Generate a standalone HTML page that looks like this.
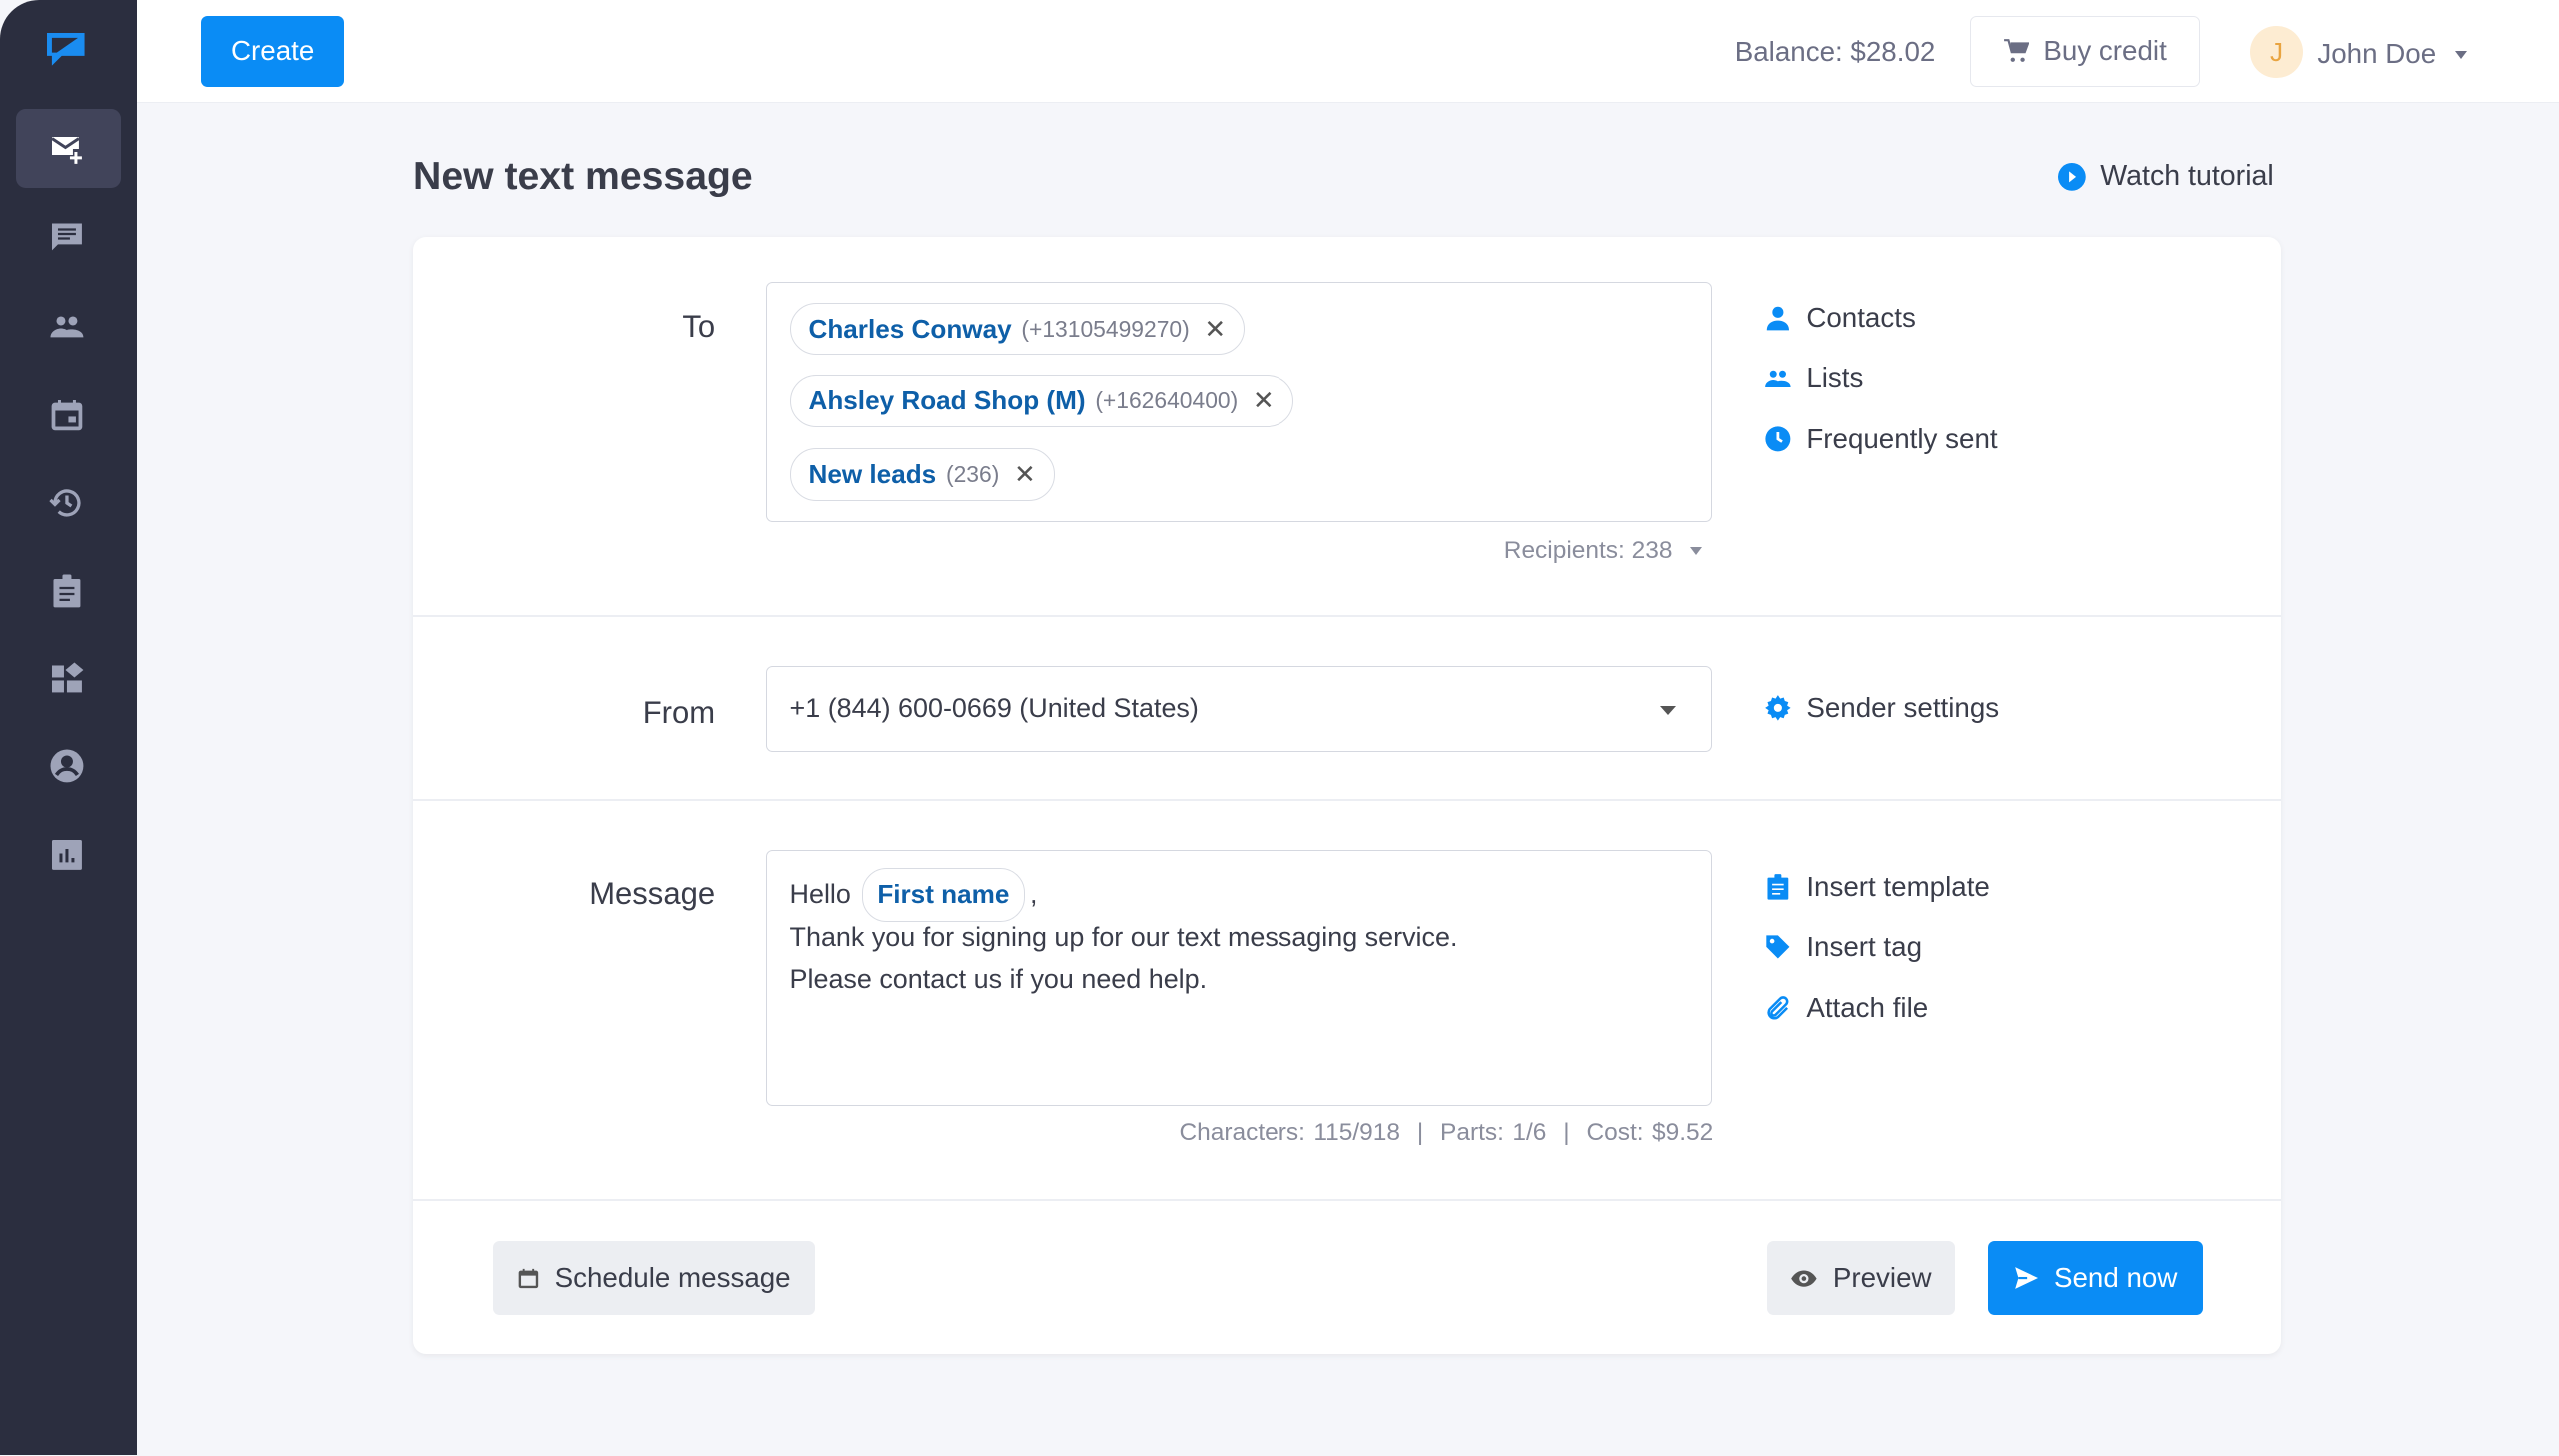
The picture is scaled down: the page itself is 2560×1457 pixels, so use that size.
<!DOCTYPE html>
<html><head><meta charset="utf-8"><style>
*{box-sizing:border-box;margin:0;padding:0}
html,body{width:2560px;height:1457px;overflow:hidden;background:#f5f6fa}
#r{zoom:1.63265;width:1568px;height:892px;position:relative;font-family:"Liberation Sans",sans-serif;color:#3a3d4a}
.a{position:absolute}
.sb{left:0;top:0;width:84px;height:892px;background:#2b2e3f;border-top-left-radius:24px}
.ic{position:absolute;left:30px;width:22px;height:22px}
.top{left:84px;top:0;right:0;height:63px;background:#fff;border-bottom:1px solid #eceef3}
.btn{position:absolute;border-radius:4px;display:flex;align-items:center;justify-content:center;font-size:17px}
.card{left:253px;top:145px;width:1145px;height:685px;background:#fff;border-radius:8px;box-shadow:0 1px 4px rgba(0,0,0,.06)}
.sep{position:absolute;left:0;right:0;height:1px;background:#eceef3}
.lbl{position:absolute;right:960px;font-size:19px;color:#3a3d4a;text-align:right}
.box{position:absolute;left:216px;width:580px;border:1px solid #d5d8e0;border-radius:4px}
.chip{position:absolute;left:14px;height:32px;border:1px solid #d9dce3;border-radius:16px;display:flex;align-items:center;padding:0 11px;white-space:nowrap}
.chip b{color:#0e5fa8;font-size:16px;font-weight:600;margin-right:6px}
.chip s{text-decoration:none;color:#7a7d8c;font-size:14px;margin-right:9px}
.chip i{font-style:normal;color:#555;font-size:16px}
.lk{position:absolute;left:828px;font-size:17px;display:flex;align-items:center}
.lk svg{width:17px;height:17px;margin-right:9px}
.msg{font-size:16.5px;line-height:26px;color:#3a3d4a}
</style></head><body><div id="r">
<div class="a sb">
<svg class="a" style="left:29px;top:20px" width="23" height="21" viewBox="0 0 23 21"><path d="M0 0H23V14H9L3 20V14H0Z" fill="#1a8cf0"/><path d="M3 3H19L6 12H3Z" fill="#2b2e3f"/></svg>
<div class="a" style="left:10px;top:67px;width:64px;height:48px;background:#41445a;border-radius:6px"></div>
<svg class="ic" style="top:80px" viewBox="0 0 24 24"><path d="M2 4h18v8h-4v4H2z" fill="#fff"/><path d="M2 5l9 6 9-6" stroke="#41445a" stroke-width="2" fill="none"/><path d="M18 14v8M14 18h8" stroke="#fff" stroke-width="2"/></svg>
<svg class="ic" style="top:134px" viewBox="0 0 24 24" fill="#9ea3b8"><path d="M2 3h20v14H6l-4 4z"/><path d="M6 7h12M6 10h12M6 13h8" stroke="#2b2e3f" stroke-width="1.5"/></svg>
<svg class="ic" style="top:189px" viewBox="0 0 24 24" fill="#9ea3b8"><circle cx="8" cy="8" r="3"/><circle cx="16" cy="8" r="3"/><path d="M1 19c0-4 4-6 7-6s7 2 7 6zM13 19c0-2 0-4-1-5 4-1 11 0 11 5z"/></svg>
<svg class="ic" style="top:243px" viewBox="0 0 24 24"><rect x="3" y="5" width="18" height="16" rx="1" fill="none" stroke="#9ea3b8" stroke-width="2.5"/><path d="M3 5h18v4H3z" fill="#9ea3b8"/><rect x="13" y="13" width="5" height="4" fill="#9ea3b8"/><path d="M7 2v4M17 2v4" stroke="#9ea3b8" stroke-width="2"/></svg>
<svg class="ic" style="top:297px" viewBox="0 0 24 24" fill="none" stroke="#9ea3b8" stroke-width="2.2"><path d="M4 12a8 8 0 1 1 2.5 5.8"/><path d="M1 10l3 3 3-3"/><path d="M12 7v5l3 2"/></svg>
<svg class="ic" style="top:351px" viewBox="0 0 24 24" fill="#9ea3b8"><rect x="3" y="4" width="18" height="19" rx="1"/><rect x="9" y="1" width="6" height="4" rx="1"/><path d="M7 10h10M7 14h10M7 18h7" stroke="#2b2e3f" stroke-width="1.5"/></svg>
<svg class="ic" style="top:405px" viewBox="0 0 24 24" fill="#9ea3b8"><rect x="2" y="3" width="8" height="8"/><path d="M17 1l6 5-6 5-6-5z"/><rect x="2" y="13" width="8" height="8"/><rect x="12" y="13" width="10" height="8"/></svg>
<svg class="ic" style="top:459px" viewBox="0 0 24 24" fill="#9ea3b8"><circle cx="12" cy="12" r="11"/><circle cx="12" cy="9" r="4" fill="#2b2e3f"/><path d="M5 18c2-3 4-4 7-4s5 1 7 4" stroke="#2b2e3f" stroke-width="2.5" fill="none"/></svg>
<svg class="ic" style="top:513px" viewBox="0 0 24 24" fill="#9ea3b8"><rect x="2" y="2" width="20" height="20" rx="1"/><path d="M8 17v-6M12 17v-9M16 17v-3" stroke="#2b2e3f" stroke-width="2"/></svg>
</div>
<div class="a top">
<div class="btn" style="left:39px;top:10px;width:88px;height:43px;background:#0a8cf5;color:#fff">Create</div>
<div class="a" style="right:382px;top:22px;font-size:17px;color:#6b6e84">Balance: $28.02</div>
<div class="btn" style="left:1123px;top:10px;width:141px;height:43px;border:1px solid #e6e8ee;color:#6b6e84"><svg width="16" height="16" viewBox="0 0 24 24" fill="#6b6e84" style="margin-right:9px"><path d="M1 2h4l3 11h12l3-8H7" stroke="#6b6e84" stroke-width="2" fill="none"/><path d="M7 6h15l-2 7H8z"/><circle cx="9" cy="20" r="2"/><circle cx="18" cy="20" r="2"/></svg>Buy credit</div>
<div class="a" style="left:1295px;top:16px;width:32px;height:32px;border-radius:50%;background:#fdecd2;color:#e9a440;font-size:16px;display:flex;align-items:center;justify-content:center">J</div>
<div class="a" style="left:1336px;top:23px;font-size:17px;color:#6b6e84">John Doe</div>
<div class="a" style="left:1420px;top:31px;border:4px solid transparent;border-top:5px solid #6b6e84"></div>
</div>
<div class="a" style="left:253px;top:95px;font-size:24px;font-weight:600;color:#3a3d4a">New text message</div>
<svg class="a" style="left:1261px;top:100px" width="17" height="17" viewBox="0 0 20 20"><circle cx="10" cy="10" r="10" fill="#0a8cf5"/><path d="M8 6l5 4-5 4z" fill="#fff"/></svg>
<div class="a" style="left:1287px;top:98px;font-size:17.5px">Watch tutorial</div>
<div class="a card">
<div class="sep" style="top:232px"></div><div class="sep" style="top:345px"></div><div class="sep" style="top:590px"></div>
<div class="lbl" style="top:44px">To</div>
<div class="box" style="top:28px;height:147px">
<div class="chip" style="top:12px"><b>Charles Conway</b><s>(+13105499270)</s><i>✕</i></div>
<div class="chip" style="top:56px"><b>Ahsley Road Shop (M)</b><s>(+162640400)</s><i>✕</i></div>
<div class="chip" style="top:101px"><b>New leads</b><s>(236)</s><i>✕</i></div>
</div>
<div class="a" style="right:373px;top:184px;font-size:15px;color:#8a8d9c">Recipients: 238</div>
<div class="a" style="left:783px;top:190px;border:4px solid transparent;border-top:5px solid #8a8d9c"></div>
<div class="lk" style="top:40px"><svg viewBox="0 0 20 20" fill="#0a8cf5"><circle cx="10" cy="6" r="4"/><path d="M2 19c0-5 4-7 8-7s8 2 8 7z"/></svg>Contacts</div>
<div class="lk" style="top:77px"><svg viewBox="0 0 24 24" fill="#0a8cf5"><circle cx="8" cy="8" r="3"/><circle cx="16" cy="8" r="3"/><path d="M1 19c0-4 4-6 7-6s7 2 7 6zM13 19c0-2 0-4-1-5 4-1 11 0 11 5z"/></svg>Lists</div>
<div class="lk" style="top:114px"><svg viewBox="0 0 20 20"><circle cx="10" cy="10" r="9" fill="#0a8cf5"/><path d="M10 5v5l3 2" stroke="#fff" stroke-width="2" fill="none"/></svg>Frequently sent</div>
<div class="lbl" style="top:281px">From</div>
<div class="box" style="top:263px;height:53px"><div class="a" style="left:14px;top:16px;font-size:16.5px">+1 (844) 600-0669 (United States)</div><div class="a" style="left:548px;top:24px;border:5px solid transparent;border-top:6px solid #555"></div></div>
<div class="lk" style="top:279px"><svg viewBox="0 0 24 24" fill="#0a8cf5"><path d="M12 1l2 3 3-1 1 3 3 1-1 3 3 2-3 2 1 3-3 1-1 3-3-1-2 3-2-3-3 1-1-3-3-1 1-3-3-2 3-2-1-3 3-1 1-3 3 1z"/><circle cx="12" cy="12" r="3.5" fill="#fff"/></svg>Sender settings</div>
<div class="lbl" style="top:392px">Message</div>
<div class="box msg" style="top:376px;height:157px;padding:12px 14px">
<div style="display:flex;align-items:center;height:30px;margin-bottom:-2px">Hello&nbsp;<span style="border:1px solid #d9dce3;border-radius:15px;padding:3px 9px;color:#0e5fa8;font-weight:600;font-size:16px;margin:0 3px 0 2px">First name</span>,</div>
<div>Thank you for signing up for our text messaging service.</div>
<div>Please contact us if you need help.</div>
</div>
<div class="a" style="right:348px;top:541px;font-size:15px;color:#8a8d9c;word-spacing:1px">Characters: 115/918 &nbsp;| &nbsp;Parts: 1/6 &nbsp;| &nbsp;Cost: $9.52</div>
<div class="lk" style="top:389px"><svg viewBox="0 0 24 24" fill="#0a8cf5"><rect x="3" y="4" width="18" height="19" rx="1"/><rect x="9" y="1" width="6" height="4" rx="1"/><path d="M7 10h10M7 14h10M7 18h7" stroke="#fff" stroke-width="1.5"/></svg>Insert template</div>
<div class="lk" style="top:426px"><svg viewBox="0 0 24 24" fill="#0a8cf5"><path d="M2 2h10l10 10-10 10L2 12z"/><circle cx="7" cy="7" r="2" fill="#fff"/></svg>Insert tag</div>
<div class="lk" style="top:463px"><svg viewBox="0 0 24 24" fill="none" stroke="#0a8cf5" stroke-width="2.2"><path d="M20 12l-8 8a5 5 0 0 1-7-7l9-9a3.5 3.5 0 0 1 5 5l-9 9a2 2 0 0 1-3-3l8-8"/></svg>Attach file</div>
<div class="btn" style="left:49px;top:616px;width:197px;height:45px;background:#eceef2;color:#3a3d4a"><svg width="14" height="14" viewBox="0 0 24 24" style="margin-right:9px"><rect x="3" y="5" width="18" height="16" rx="1" fill="none" stroke="#555" stroke-width="2.5"/><path d="M3 5h18v4H3z" fill="#555"/><path d="M7 2v4M17 2v4" stroke="#555" stroke-width="2"/></svg>Schedule message</div>
<div class="btn" style="left:830px;top:616px;width:115px;height:45px;background:#eceef2;color:#3a3d4a"><svg width="17" height="13" viewBox="0 0 24 16" style="margin-right:9px"><path d="M1 8c3-5 7-7 11-7s8 2 11 7c-3 5-7 7-11 7S4 13 1 8z" fill="#555"/><circle cx="12" cy="8" r="4" fill="#eceef2"/><circle cx="12" cy="8" r="2" fill="#555"/></svg>Preview</div>
<div class="btn" style="left:965px;top:616px;width:132px;height:45px;background:#0a8cf5;color:#fff"><svg width="16" height="16" viewBox="0 0 24 24" style="margin-right:9px"><path d="M2 2l21 10L2 22l3-10z" fill="#fff"/><path d="M5 12h8" stroke="#0a8cf5" stroke-width="2"/></svg>Send now</div>
</div>
</div></body></html>
